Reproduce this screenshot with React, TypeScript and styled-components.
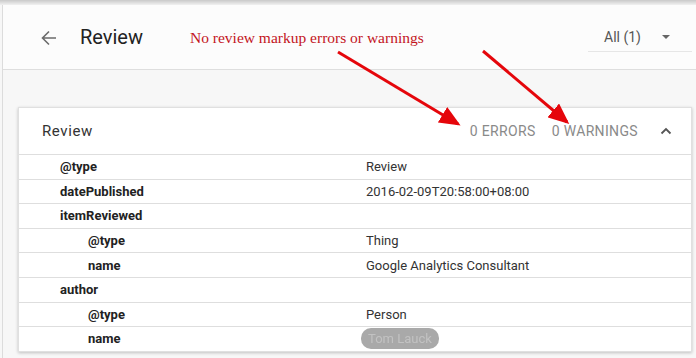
import styled, { createGlobalStyle } from "styled-components"

const GlobalStyle = createGlobalStyle`
  html, body {
    margin: 0;
    padding: 0;
  }
  body {
    font-family: Roboto, "Liberation Sans", Arial, sans-serif;
    background: #f7f7f7;
  }
`

type Row = { key: string; value?: string; nested?: boolean; hidden?: boolean }

const rows: Row[] = [
    { key: "@type", value: "Review" },
    { key: "datePublished", value: "2016-02-09T20:58:00+08:00" },
    { key: "itemReviewed" },
    { key: "@type", value: "Thing", nested: true },
    { key: "name", value: "Google Analytics Consultant", nested: true },
    { key: "author" },
    { key: "@type", value: "Person", nested: true },
    { key: "name", value: "Tom Lauck", nested: true, hidden: true },
]

export default function App() {
    return (
        <Page>
            <GlobalStyle />
            <TopShadow />
            <Frame>
                <Header>
                    <BackButton>
                        <svg width="18" height="18" viewBox="0 0 18 18" fill="none">
                            <path d="M16 9H3M9 2.5L2.5 9L9 15.5" stroke="#6b6b6b" strokeWidth="1.6" />
                        </svg>
                    </BackButton>
                    <Title>Review</Title>
                    <Annotation>No review markup errors or warnings</Annotation>
                    <Dropdown>
                        <span>All (1)</span>
                        <Caret />
                    </Dropdown>
                </Header>
                <Body>
                    <Card>
                        <CardHeader>
                            <CardTitle>Review</CardTitle>
                            <Counts>
                                <Count>0 ERRORS</Count>
                                <Count>0 WARNINGS</Count>
                            </Counts>
                            <Collapse>
                                <svg width="12" height="8" viewBox="0 0 12 8" fill="none">
                                    <path d="M1.5 6.5L6 2L10.5 6.5" stroke="#555" strokeWidth="1.8" />
                                </svg>
                            </Collapse>
                        </CardHeader>
                        {rows.map((r, i) => (
                            <PropRow key={i}>
                                <Key $nested={r.nested}>{r.key}</Key>
                                {r.hidden ? <Redacted>{r.value}</Redacted> : <Value>{r.value}</Value>}
                            </PropRow>
                        ))}
                    </Card>
                </Body>
            </Frame>
            <Arrows width="696" height="358" viewBox="0 0 696 358">
                <defs>
                    <marker id="head" markerWidth="7" markerHeight="6" refX="6" refY="3" orient="auto" markerUnits="strokeWidth">
                        <path d="M0 0L7 3L0 6Z" fill="#e5060b" />
                    </marker>
                </defs>
                <line x1="338" y1="52" x2="458" y2="124" stroke="#e5060b" strokeWidth="3" markerEnd="url(#head)" />
                <line x1="483" y1="51" x2="567" y2="122" stroke="#e5060b" strokeWidth="3" markerEnd="url(#head)" />
            </Arrows>
        </Page>
    )
}

const Page = styled.div`
    position: relative;
    width: 696px;
    height: 358px;
    overflow: hidden;
    background: #f7f7f7;
`

const TopShadow = styled.div`
    height: 5px;
    background: linear-gradient(#c9c9c9, #f1f1f1);
`

const Frame = styled.div`
    margin-left: 2px;
    border-left: 1px solid #dcdcdc;
    height: 353px;
`

const Header = styled.div`
    height: 64px;
    display: flex;
    align-items: center;
    padding: 0 4px 0 37px;
    background: #fcfcfc;
    border-bottom: 1px solid #dedede;
`

const BackButton = styled.div`
    display: flex;
    align-items: center;
    width: 18px;
    height: 18px;
    margin-top: 1px;
`

const Title = styled.div`
    margin-left: 22px;
    font-size: 20px;
    color: #222;
`

const Annotation = styled.div`
    margin-left: 47px;
    margin-top: 2px;
    font-family: "Liberation Serif", "Times New Roman", serif;
    font-size: 15.5px;
    color: #c3141c;
`

const Dropdown = styled.div`
    margin-left: auto;
    width: 104px;
    height: 30px;
    box-sizing: border-box;
    padding: 0 22px 0 16px;
    display: flex;
    align-items: center;
    justify-content: space-between;
    border-bottom: 1px solid #e6e6e6;
    font-size: 14px;
    color: #555;
`

const Caret = styled.div`
    width: 0;
    height: 0;
    border-left: 4px solid transparent;
    border-right: 4px solid transparent;
    border-top: 4px solid #666;
`

const Body = styled.div`
    padding: 37px 4px 0 15px;
`

const Card = styled.div`
    background: #fff;
    border: 1px solid #e0e0e0;
    box-shadow: 0 1px 3px rgba(0, 0, 0, 0.22);
`

const CardHeader = styled.div`
    height: 46px;
    display: flex;
    align-items: center;
    padding: 0 19px 0 23px;
    border-bottom: 1px solid #dedede;
`

const CardTitle = styled.div`
    font-size: 15px;
    letter-spacing: 0.6px;
    color: #333;
`

const Counts = styled.div`
    margin-left: auto;
    display: flex;
    gap: 16px;
`

const Count = styled.div`
    font-size: 14px;
    letter-spacing: 0.35px;
    color: #8a8a8a;
`

const Collapse = styled.div`
    display: flex;
    margin-left: 22px;
`

const PropRow = styled.div`
    display: grid;
    grid-template-columns: 347px 1fr;
    align-items: center;
    height: 23.6px;
    border-bottom: 1px solid #dedede;
    &:last-child {
        border-bottom: none;
    }
`

const Key = styled.div<{ $nested?: boolean }>`
    padding-left: ${p => (p.$nested ? 69 : 41)}px;
    font-size: 13px;
    font-weight: 700;
    color: #222;
`

const Value = styled.div`
    font-size: 13px;
    color: #333;
`

const Redacted = styled.div`
    justify-self: start;
    margin-left: -5px;
    padding: 3px 7px;
    border-radius: 10px;
    background: #a9a9a9;
    font-size: 13px;
    color: #c2c2c2;
    filter: blur(0.4px);
`

const Arrows = styled.svg`
    position: absolute;
    left: 0;
    top: 0;
    pointer-events: none;
`
